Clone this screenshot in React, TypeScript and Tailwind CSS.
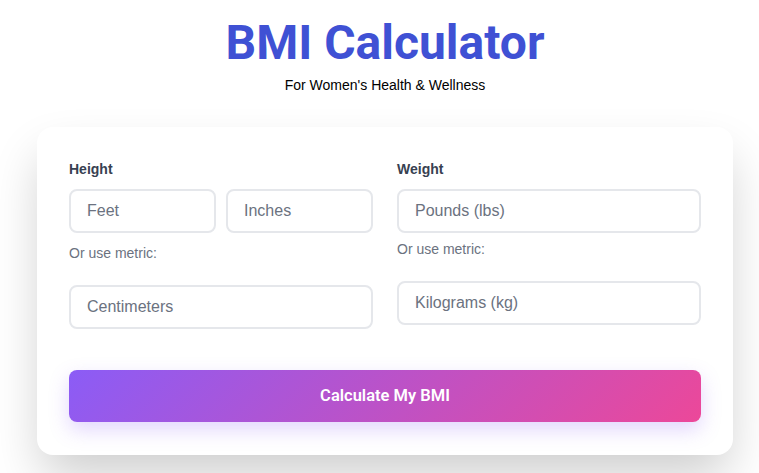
import React from 'react';

const roboto = { fontFamily: 'Roboto, "Liberation Sans", sans-serif' };
const body = { fontFamily: '"Liberation Sans", Arial, sans-serif' };

function Field({ placeholder }: { placeholder: string }) {
  return (
    <input
      type="text"
      placeholder={placeholder}
      style={body}
      className="h-[44px] w-full rounded-lg border-2 border-[#e5e7eb] bg-white px-4 text-base text-gray-700 placeholder:text-[#6b7280] outline-none"
    />
  );
}

export default function App() {
  return (
    <div className="min-h-screen overflow-hidden bg-white" style={body}>
      <div className="w-[770px] pb-8">
        <header className="pt-[15px] text-center">
          <h1 className="text-5xl leading-[56px] font-bold text-[#3f51d4]" style={roboto}>BMI Calculator</h1>
          <p className="mt-1 text-sm leading-5 text-black">For Women's Health &amp; Wellness</p>
        </header>

        <div className="mx-auto mt-8 w-[696px] rounded-2xl bg-white px-8 pt-8 pb-[33px] shadow-[0_25px_50px_-5px_rgba(0,0,0,0.2)]">
          <div className="grid grid-cols-2 gap-6">
            <div>
              <label className="mb-2.5 block text-sm leading-5 font-bold text-[#374151]">Height</label>
              <div className="grid grid-cols-2 gap-[10px]">
                <Field placeholder="Feet" />
                <Field placeholder="Inches" />
              </div>
              <p className="mt-2.5 mb-[22px] text-sm leading-5 text-[#6b7280]">Or use metric:</p>
              <Field placeholder="Centimeters" />
            </div>
            <div>
              <label className="mb-2.5 block text-sm leading-5 font-bold text-[#374151]">Weight</label>
              <Field placeholder="Pounds (lbs)" />
              <p className="mt-1.5 mb-[22px] text-sm leading-5 text-[#6b7280]">Or use metric:</p>
              <Field placeholder="Kilograms (kg)" />
            </div>
          </div>

          <button
            className="mt-[41px] h-[52px] w-full rounded-lg bg-[linear-gradient(135deg,#8b5cf6,#ec4899)] text-[16.5px] font-semibold text-white shadow-[0_8px_20px_rgba(139,92,246,0.25)]"
            style={roboto}
          >
            Calculate My BMI
          </button>
        </div>
      </div>
    </div>
  );
}
